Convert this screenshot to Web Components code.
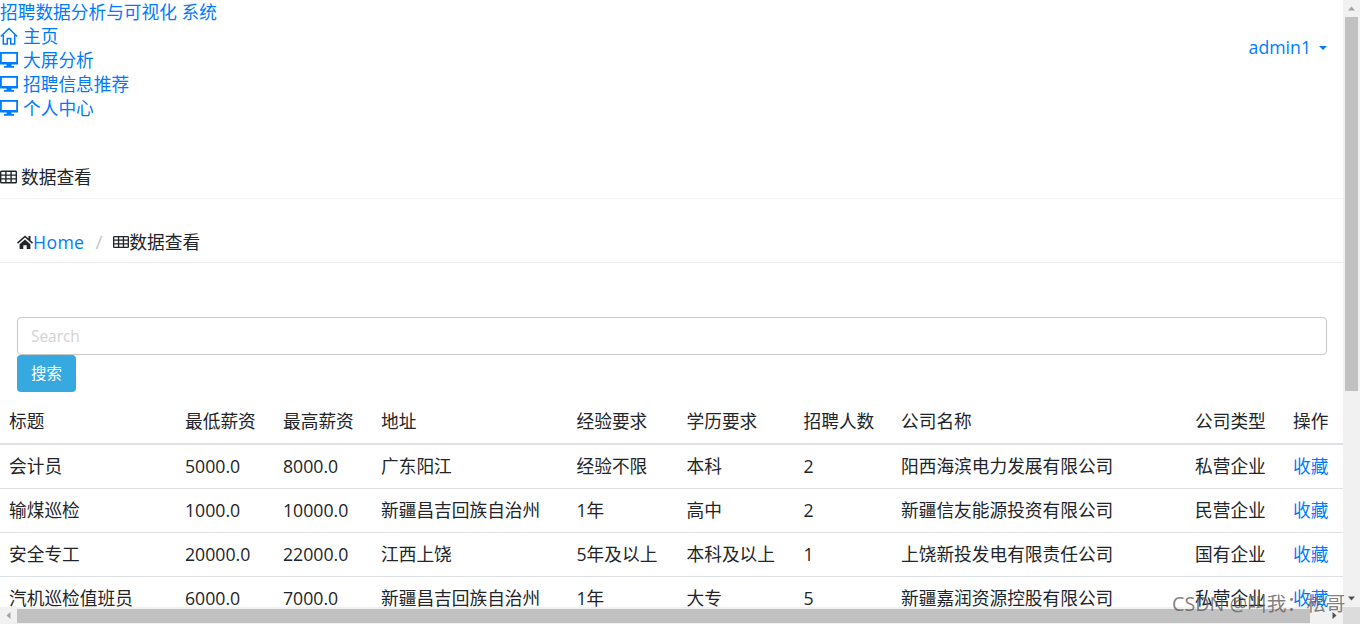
<!DOCTYPE html>
<html lang="zh"><head><meta charset="utf-8"><title>招聘数据分析与可视化系统</title>
<style>
html,body{margin:0;padding:0;height:100%;overflow:hidden;background:#fff}
body{font:17.7px/24px "Open Sans","Noto Sans CJK SC",sans-serif;color:#212529}
</style></head><body>
<app-window>
  <top-nav user="admin1">
    <a slot="brand" href="#">招聘数据分析与可视化 系统</a>
    <nav-item icon="home">主页</nav-item>
    <nav-item icon="monitor">大屏分析</nav-item>
    <nav-item icon="monitor">招聘信息推荐</nav-item>
    <nav-item icon="monitor">个人中心</nav-item>
  </top-nav>
  <page-title>数据查看</page-title>
  <bread-crumb current="数据查看"></bread-crumb>
  <search-form></search-form>
  <job-table></job-table>
</app-window>
<script>
const ICONS={
 home:'<svg width="18" height="18" viewBox="0 0 18 18" fill="none" stroke="currentColor" stroke-width="1.500"><path d="M.8 9.500 9 1.500l8.200 8"/><path d="M3.300 7.500v9.500h4v-5.500h3.400V17h4V7.500"/></svg>',
 monitor:'<svg width="18" height="18" viewBox="0 0 18 18"><path fill="currentColor" d="M0 1h18V13.500H11.500V15h2.500v1.800H4V15h2.500v-1.500H0z"/><path fill="#fff" d="M1.800 2.800h14.400v8.200H1.800z"/></svg>',
 table:'<svg width="17" height="14" viewBox="0 0 17 14" fill="none" stroke="currentColor" stroke-width="1.400"><rect x=".7" y="1.200" width="15.600" height="11.600" rx=".8"/><path d="M.7 5.100h15.600M.7 8.900h15.600M5.900 1.200v11.600M11.100 1.200v11.600"/></svg>',
 solidHome:'<svg width="16" height="14" viewBox="0 0 16 14"><path fill="currentColor" d="M8 .5 0 7.500l1 1.200L8 2.600l7 6.100 1-1.200-2.500-2.200V1h-2v2.600zM2.600 9.200 8 4.400l5.400 4.800V14H9.700v-3.700H6.300V14H2.600z"/></svg>'
};
function define(name,html){
  customElements.define(name,class extends HTMLElement{
    connectedCallback(){
      if(this.shadowRoot)return;
      const r=this.attachShadow({mode:'open'});
      r.innerHTML=typeof html==='function'?html(this):html;
    }
  });
}
define('app-window',`<style>
:host{display:grid;grid-template-columns:1fr 17px;grid-template-rows:1fr 17px;width:1360px;height:624px;overflow:hidden;position:relative}
.page{overflow:hidden;min-width:0;min-height:0}
.corner{background:#dcdcdc}
.mark{position:absolute;left:1172px;top:591px;font-size:19.700px;line-height:26px;color:rgba(95,95,95,.8);white-space:nowrap;pointer-events:none}
</style>
<div class="page"><slot></slot></div>
<scroll-bar dir="v"></scroll-bar>
<scroll-bar dir="h"></scroll-bar>
<div class="corner"></div>
<div class="mark">CSDN @叫我：松哥</div>`);
define('scroll-bar',h=>{
 const v=h.getAttribute('dir')==='v';
 return `<style>
:host{display:flex;background:#f1f1f1;flex-direction:${v?'column':'row'};align-items:center}
.b{flex:none;width:17px;height:17px;display:flex;align-items:center;justify-content:center}
.t{flex:none;background:#c1c1c1;${v?'width:13px;height:374px':'height:14px;width:1293px'}}
.s{flex:1}
svg{display:block;fill:#a3a3a3}
</style>
<div class="b"><svg width="9" height="9" viewBox="0 0 9 9">${v?'<path d="M1 6.500h7L4.500 2.500z"/>':'<path d="M6.500 1v7L2.500 4.500z"/>'}</svg></div>
<div class="t"></div><div class="s"></div>
<div class="b"><svg width="9" height="9" viewBox="0 0 9 9">${v?'<path d="M1 2.500h7L4.500 6.500z" style="fill:#505050"/>':'<path d="M2.500 1v7L6.500 4.500z" style="fill:#505050"/>'}</svg></div>`;
});
define('top-nav',h=>`<style>
:host{display:flex;justify-content:space-between;align-items:center;height:120px;color:#007bff}
::slotted(a){display:block;color:#007bff;text-decoration:none}
.user{padding-right:16px;display:flex;align-items:center;margin-bottom:26px}
.caret{margin-left:8px;margin-top:2px;width:0;height:0;border:4.500px solid transparent;border-top-color:#007bff;border-bottom:0}
</style>
<div><slot name="brand"></slot><slot></slot></div>
<div class="user">${h.getAttribute('user')}<span class="caret"></span></div>`);
define('nav-item',h=>`<style>
:host{display:flex;align-items:center;height:24px;color:#007bff;gap:5px}
svg{display:block;flex:none}
</style>${ICONS[h.getAttribute('icon')]}<slot></slot>`);
define('page-title',`<style>
:host{display:flex;align-items:center;gap:4px;margin-top:45px;height:34px;box-sizing:border-box;padding-bottom:10px;border-bottom:1px solid #f5f5f5}
svg{display:block;flex:none}
</style>${ICONS.table}<slot></slot>`);
define('bread-crumb',h=>`<style>
:host{display:flex;align-items:center;height:64px;box-sizing:border-box;padding:22px 0 0 17px;border-bottom:1px solid #e9ecef}
a{color:#007bff;text-decoration:none;letter-spacing:.35px}
i{font-style:normal;color:#c4c8cc;padding:0 11px;font-size:19px}
span{display:flex;align-items:center}
svg{display:block;flex:none;width:16px}
</style><span>${ICONS.solidHome}<a href="#">Home</a></span><i>/</i><span>${ICONS.table}${h.getAttribute('current')}</span>`);
define('search-form',`<style>
:host{display:block;padding:54px 16px 0 17px;height:136px;box-sizing:border-box}
input{display:block;box-sizing:border-box;width:100%;height:38px;border:1px solid #c8c8c8;border-radius:4px;padding:0 13px;font:inherit;font-size:15.400px;background:#fff;outline:0}
input::placeholder{color:#d2d2d2}
button{display:block;width:59px;height:37px;border:0;border-radius:4px;background:#36a9e0;color:#fff;font:inherit;font-size:15.400px;padding:0}
</style><input placeholder="Search"><button>搜索</button>`);
const COLS=[176,98,98,195.5,110,117,97.5,294,98,59];
const HEAD=['标题','最低薪资','最高薪资','地址','经验要求','学历要求','招聘人数','公司名称','公司类型','操作'];
const ROWS=[
['会计员','5000.0','8000.0','广东阳江','经验不限','本科','2','阳西海滨电力发展有限公司','私营企业'],
['输煤巡检','1000.0','10000.0','新疆昌吉回族自治州','1年','高中','2','新疆信友能源投资有限公司','民营企业'],
['安全专工','20000.0','22000.0','江西上饶','5年及以上','本科及以上','1','上饶新投发电有限责任公司','国有企业'],
['汽机巡检值班员','6000.0','7000.0','新疆昌吉回族自治州','1年','大专','5','新疆嘉润资源控股有限公司','私营企业']];
define('job-table',`<style>
:host{display:block}
table{border-collapse:collapse;table-layout:fixed;width:1343px}
th,td{padding:0 0 0 9px;font-weight:400;text-align:left;white-space:nowrap;overflow:hidden;height:44px;box-sizing:border-box;border-bottom:1px solid #dee2e6;vertical-align:middle}
th{height:45px;border-bottom:2px solid #dee2e6}
a{color:#007bff;text-decoration:none}
</style><table><colgroup>${COLS.map(w=>`<col style="width:${w}px">`).join('')}</colgroup>
<thead><tr>${HEAD.map(t=>`<th>${t}</th>`).join('')}</tr></thead>
<tbody>${ROWS.map(r=>`<tr>${r.map(t=>`<td>${t}</td>`).join('')}<td><a href="#">收藏</a></td></tr>`).join('')}</tbody></table>`);
</script></body></html>
